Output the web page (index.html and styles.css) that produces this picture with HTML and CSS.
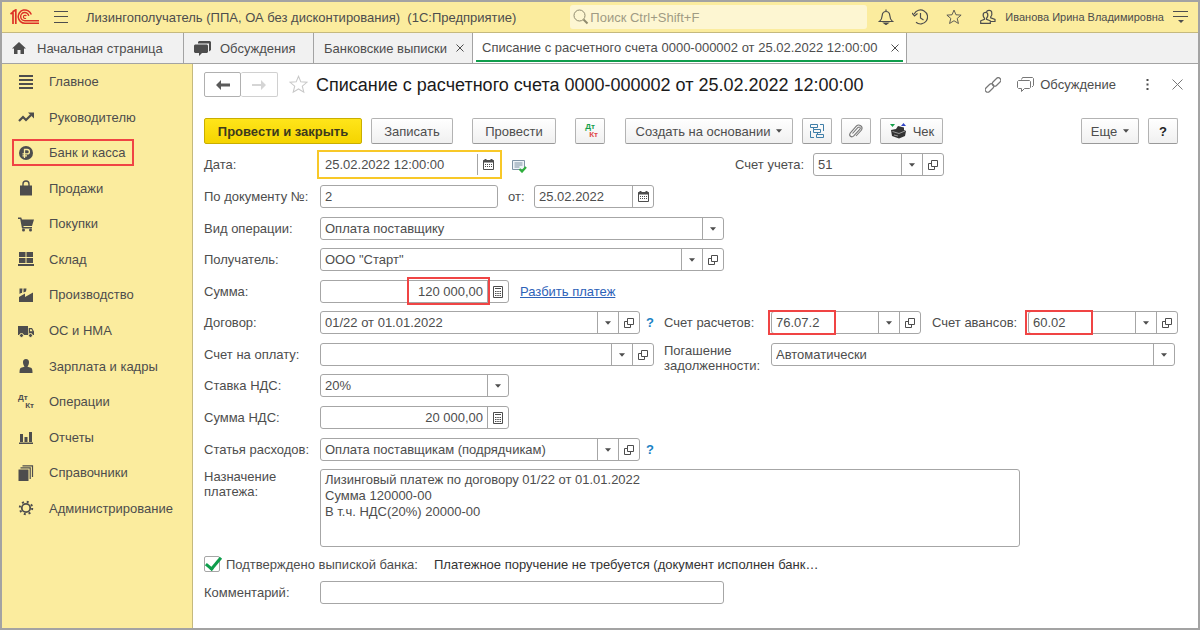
FILE: index.html
```html
<!DOCTYPE html>
<html lang="ru">
<head>
    <meta charset="UTF-8">
    <meta name="viewport" content="width=device-width, initial-scale=1.0">
    <title>Списание с расчетного счета</title>
    <link rel="stylesheet" href="styles.css">
</head>
<body>
    <!-- Общие иконки -->
    <svg class="sprite" aria-hidden="true">
        <symbol id="i-down" viewBox="0 0 7 4"><path d="M0 0h7L3.5 4z" fill="currentColor"/></symbol>
        <symbol id="i-open" viewBox="0 0 10 10"><path d="M3.500.5h6v6h-6zM3.500 3.500h-3v6h6v-3" fill="none" stroke="currentColor"/></symbol>
        <symbol id="i-cal" viewBox="0 0 11 11"><path d="M.5 1.500h10v9H.5z" fill="#fff" stroke="currentColor"/><path d="M0 2.500h11M2.500 0v2M8.500 0v2" stroke="currentColor" stroke-width="2"/><path d="M2 5.500h7M2 7.500h7" stroke="currentColor" stroke-dasharray="1 1"/></symbol>
        <symbol id="i-calc" viewBox="0 0 10 12"><path d="M.5.5h9v11h-9z" fill="#fff" stroke="currentColor"/><path d="M2 2.500h6" stroke="currentColor"/><path d="M2 5.500h6M2 7.500h6M2 9.500h6" stroke="currentColor" stroke-dasharray="1.500 .75"/></symbol>
        <symbol id="i-close" viewBox="0 0 8 8"><path d="M.5.5l7 7M7.500.5l-7 7" stroke="currentColor" fill="none"/></symbol>
        <symbol id="i-star" viewBox="0 0 18 18"><path d="M9 1.200l2.200 5.300 5.800.4-4.400 3.700 1.400 5.700L9 13.200l-5 3.100 1.400-5.700L1 6.900l5.800-.4z" fill="none" stroke="currentColor"/></symbol>
    </svg>

    <div class="window">
        <header class="topbar">
            <svg class="logo" viewBox="0 0 30 16" fill="none" stroke="#dc3026">
                <path d="M.5 5L3 3.200V15M2.500 2.800L5.800.9V15" stroke-width="1.700"/>
                <path d="M21.300 5.500A6.700 6.700 0 1 0 15 14.300H29" stroke-width="1.500"/>
                <path d="M18.800 6.800A4.100 4.100 0 1 0 15 11.700H29" stroke-width="1.400"/>
                <path d="M16.400 7A1.600 1.600 0 1 0 16 9.200" stroke-width="1.200"/>
            </svg>
            <button class="icon-btn menu" aria-label="Меню"><svg width="14" height="12" viewBox="0 0 14 12"><path d="M0 .5h14M0 5.500h14M0 11.500h14" stroke="currentColor"/></svg></button>
            <span class="app-name">Лизингополучатель (ППА, ОА без дисконтирования)&nbsp; (1С:Предприятие)</span>
            <label class="search">
                <svg width="16" height="16" viewBox="0 0 16 16" fill="none" stroke="currentColor"><circle cx="6.500" cy="6.500" r="5.500"/><path d="M10.500 10.500l4 4" stroke-width="2"/></svg>
                <input type="text" placeholder="Поиск Ctrl+Shift+F" aria-label="Поиск">
            </label>
            <div class="top-icons">
                <button class="icon-btn" aria-label="Оповещения"><svg width="16" height="16" viewBox="0 0 16 16" fill="none" stroke="currentColor" stroke-width="1.200"><path d="M1.500 12.500h13c-2-1.500-2.500-3-2.700-6C11.600 4 10 2.500 8 2.500S4.400 4 4.200 6.500c-.2 3-.7 4.500-2.700 6zM8 2.500V.5"/><path d="M6 14h4l-2 1.500z" fill="currentColor"/></svg></button>
                <button class="icon-btn" aria-label="История"><svg width="16" height="16" viewBox="0 0 16 16" fill="none" stroke="currentColor"><path d="M2.200 5A7 7 0 1 1 4 13.300" stroke-width="1.200"/><path d="M0 4l2.500 3L5.500 4.500M8.500 4v5l3 2" stroke-width="1.200"/></svg></button>
                <button class="icon-btn" aria-label="Избранное"><svg width="16" height="16"><use href="#i-star"/></svg></button>
                <button class="icon-btn" aria-label="Пользователь"><svg width="16" height="16" viewBox="0 0 16 16" fill="none" stroke="currentColor" stroke-width="1.200"><path d="M.7 14.300v-2.500l3.800-1.500v-1C3 8 3 6 3.400 4.500 4 3 7 3 7.600 4.500 8 6 8 8 6.500 9.300v1l3.800 1.500v2.500z"/><path d="M6.500 3C7 1 11 .5 11.700 3c.5 2 .2 3.500-1 4.800v1l4.300 1.700v2h-4.500"/></svg></button>
                <span class="user">Иванова Ирина Владимировна</span>
                <button class="icon-btn" aria-label="Сервис"><svg width="15" height="14" viewBox="0 0 15 14"><path d="M0 1.500h15M0 6.500h15" stroke="currentColor"/><path d="M5 10h6l-3 3z" fill="currentColor"/></svg></button>
            </div>
        </header>

        <nav class="tabs">
            <a class="tab tab-home" href="#"><svg width="14" height="12" viewBox="0 0 14 12"><path d="M7 0L0 6.500h2V12h3.500V8h3v4H12V6.500h2z" fill="currentColor"/></svg>Начальная страница</a>
            <a class="tab tab-talk" href="#"><svg width="17" height="15" viewBox="0 0 17 15" fill="currentColor"><path d="M5 0h11l1 1v8l-2 1.500V2.500H4V1z"/><path d="M1 3.500h12l1 1V11l-1 1H8l-3 3v-3H1l-1-1V4.500z"/></svg>Обсуждения</a>
            <a class="tab tab-bank" href="#">Банковские выписки<svg class="x" width="8" height="8"><use href="#i-close"/></svg></a>
            <a class="tab active" href="#"><span class="tab-inner">Списание с расчетного счета 0000-000002 от 25.02.2022 12:00:00<svg class="x" width="8" height="8"><use href="#i-close"/></svg></span></a>
        </nav>

        <div class="body">
            <nav class="sidebar">
                <div class="sections">
                    <a href="#"><svg viewBox="0 0 16 16"><path d="M1 2h14M1 6h14M1 10h14M1 14h14" stroke="currentColor" stroke-width="2"/></svg>Главное</a>
                    <a href="#"><svg viewBox="0 0 16 16"><path d="M1 12l4-4 3 3 5-5" fill="none" stroke="currentColor" stroke-width="2.200"/><path d="M10 3.500h6v6z" fill="currentColor"/></svg>Руководителю</a>
                    <a href="#" class="marked"><svg viewBox="0 0 16 16"><circle cx="8" cy="8" r="7" fill="currentColor"/><path d="M6.500 13V4.500h2.700a2.200 2.200 0 0 1 0 4.400H4.500M4.500 10.800H9" fill="none" stroke="#fbec9e" stroke-width="1.300"/></svg>Банк и касса</a>
                    <a href="#"><svg viewBox="0 0 16 16"><path d="M2 5.500h12v10H2z" fill="currentColor"/><path d="M5 8V4a3 3 0 0 1 6 0v4" fill="none" stroke="currentColor" stroke-width="1.400"/></svg>Продажи</a>
                    <a href="#"><svg viewBox="0 0 16 16" fill="currentColor"><path d="M0 1.500h3.200L4 3.500h12L14 10H5.500v1H14v1.500H4L2.200 3H0z"/><circle cx="5.500" cy="14" r="1.500"/><circle cx="12.500" cy="14" r="1.500"/></svg>Покупки</a>
                    <a href="#"><svg viewBox="0 0 16 16" fill="currentColor"><path d="M1 1h6.500v5H1zM8.500 1H15v5H8.500zM1 7h6.500v5H1zM8.500 7H15v5H8.500zM0 13h16v2H0z"/></svg>Склад</a>
                    <a href="#"><svg viewBox="0 0 16 16" fill="currentColor"><path d="M1 15V10L7 6.500V10l8-4.500V15zM1.500 1.500h3L4 6H3L1.500 7zM5.500 1.500h3L8 4.500l-2.500 1z"/></svg>Производство</a>
                    <a href="#"><svg viewBox="0 0 16 16"><path d="M0 3h10v9H0zM10.700 5H14l2 3.500V12h-5.300z" fill="currentColor"/><path d="M12 6.300h1.500l1 2H12z" fill="#fbec9e"/><g fill="currentColor" stroke="#fbec9e"><circle cx="3.500" cy="12.500" r="2"/><circle cx="12.500" cy="12.500" r="2"/></g></svg>ОС и НМА</a>
                    <a href="#"><svg viewBox="0 0 16 16" fill="currentColor"><path d="M8 1c2 0 3.200 1.500 3 3.500C10.900 6.500 10 8 9.500 8.800l3.500 1c1 .5 1.500 2 1.500 5.200h-13c0-3.200.5-4.700 1.500-5.200l3.500-1C6 8 5.100 6.500 5 4.500 4.800 2.500 6 1 8 1z"/></svg>Зарплата и кадры</a>
                    <a href="#"><span class="dtkt"><b>Дт</b><b>Кт</b></span>Операции</a>
                    <a href="#"><svg viewBox="0 0 16 16" fill="currentColor"><path d="M1 13.500h14V15H1zM2 5h3v8H2zM6.500 8h3v5h-3zM11 3h3v10h-3z"/></svg>Отчеты</a>
                    <a href="#"><svg viewBox="0 0 16 16"><path d="M.5 4.500h10V16H.5z" fill="currentColor"/><path d="M2.500 2.900h9.700V14M4.500.9h10V12" fill="none" stroke="currentColor" stroke-width="1.200"/></svg>Справочники</a>
                    <a href="#"><svg viewBox="0 0 16 16" fill="none" stroke="currentColor"><circle cx="8" cy="8" r="4.200" stroke-width="1.800"/><circle cx="8" cy="8" r="6.200" stroke-width="2" stroke-dasharray="2 2.870"/></svg>Администрирование</a>
                </div>
            </nav>

            <main class="content">
                <div class="title-row">
                    <div class="history">
                        <button aria-label="Назад"><svg width="14" height="10" viewBox="0 0 14 10"><path d="M0 5l5-5v3.500h9v3H5V10z" fill="currentColor"/></svg></button>
                        <button aria-label="Вперед" disabled><svg width="14" height="10" viewBox="0 0 14 10"><path d="M14 5L9 0v4H0v2h9v4z" fill="currentColor"/></svg></button>
                    </div>
                    <button class="icon-btn fav" aria-label="В избранное"><svg width="19" height="19"><use href="#i-star"/></svg></button>
                    <h1>Списание с расчетного счета 0000-000002 от 25.02.2022 12:00:00</h1>
                    <div class="title-tools">
                        <button class="icon-btn" aria-label="Ссылка"><svg width="16" height="16" viewBox="0 0 16 16" fill="none" stroke="#777" stroke-width="1.200"><rect x="6.500" y="2.500" width="10" height="5" rx="2.500" transform="rotate(-45 11.500 5)"/><rect x="-.5" y="8.500" width="10" height="5" rx="2.500" transform="rotate(-45 4.500 11)"/></svg></button>
                        <button class="icon-btn talk"><svg width="17" height="15" viewBox="0 0 17 15" fill="none" stroke="#777"><path d="M4.500 2.500l1-2h10l1 1v7l-1.500 1.500"/><path d="M1.500 3.500h11l1 1v6l-1 1H7.500l-3 3v-3h-3l-1-1v-6z"/></svg>Обсуждение</button>
                        <button class="icon-btn dots" aria-label="Еще действия"><svg width="3" height="11" viewBox="0 0 3 11"><path d="M.5 0h2v2h-2zM.5 4.500h2v2h-2zM.5 9h2v2h-2z" fill="currentColor"/></svg></button>
                        <button class="icon-btn close" aria-label="Закрыть"><svg width="11" height="11" viewBox="0 0 11 11"><path d="M.5.5l10 10M10.500.5l-10 10" stroke="currentColor"/></svg></button>
                    </div>
                </div>

                <div class="toolbar">
                    <button class="btn primary">Провести и закрыть</button>
                    <button class="btn w-save">Записать</button>
                    <button class="btn w-post">Провести</button>
                    <button class="btn square" aria-label="Дт Кт"><span class="dtkt color"><b>Дт</b><b>Кт</b></span></button>
                    <button class="btn w-base">Создать на основании<svg width="6" height="4"><use href="#i-down"/></svg></button>
                    <div class="btn-set">
                        <button class="btn square" aria-label="Структура"><svg width="16" height="16" viewBox="0 0 16 16" fill="none" stroke="#3f7ea8"><path d="M1.500 1.500h7v3h-7zM4.500 6.500h7v3h-7zM7.500 11.500h7v3h-7zM4.500 4.500v2M8.500 9.500v2M11 1.500h3.500V8M5 14.500H1.500V8"/></svg></button>
                        <button class="btn square" aria-label="Вложения"><svg width="16" height="16" viewBox="0 0 16 16" fill="none" stroke="#777" stroke-width="1.100"><path d="M4.500 10.500l5.500-6c1.500-1.300 3 .2 2 1.700l-6.500 7c-2 1.700-5-.5-3.300-3L8.500 3c2.500-2.500 7 .5 5 4l-5.500 6"/></svg></button>
                        <button class="btn w-check"><svg width="18" height="16" viewBox="0 0 18 16"><path d="M2 7l5-1 2-3 6 1.500V7l2 1-1 5-6 2.500L3 13z" fill="#333"/><path d="M3.500 8.500l6.500 2 6-2.500M5 12l4 1" stroke="#999" fill="none"/><path d="M1 1h5L3.500 4z" fill="#14a04a"/><path d="M12 3l2.500-3L17 3z" fill="#3346c8"/></svg>Чек</button>
                    </div>
                    <div class="btn-set right">
                        <button class="btn w-more">Еще<svg width="6" height="4"><use href="#i-down"/></svg></button>
                        <button class="btn square help">?</button>
                    </div>
                </div>

                <form class="form">
                    <div class="group">
                        <div class="row">
                            <label for="date">Дата:</label>
                            <div class="field w-date focused"><input type="text" id="date" value="25.02.2022 12:00:00"><button type="button" aria-label="Календарь"><svg width="11" height="11"><use href="#i-cal"/></svg></button></div>
                            <svg class="posted" width="15" height="13" viewBox="0 0 15 13"><path d="M.5.5h12v9H.5z" fill="#eef3f8" stroke="#7f93a5"/><path d="M2.500 3h8M2.500 5h8M2.500 7h5" stroke="#7f93a5"/><path d="M7.500 9l2.500 2.500 4-4.500" fill="none" stroke="#2eae3c" stroke-width="2.200"/></svg>
                            <label class="side account" for="account">Счет учета:</label>
                            <div class="field w-account"><input type="text" id="account" value="51"><button type="button" aria-label="Выбрать"><svg width="6" height="4"><use href="#i-down"/></svg></button><button type="button" aria-label="Открыть"><svg width="10" height="10"><use href="#i-open"/></svg></button></div>
                        </div>
                        <div class="row">
                            <label for="docnum">По документу №:</label>
                            <div class="field w-num"><input type="text" id="docnum" value="2"></div>
                            <label class="side from" for="docdate">от:</label>
                            <div class="field w-docdate"><input type="text" id="docdate" value="25.02.2022"><button type="button" aria-label="Календарь"><svg width="11" height="11"><use href="#i-cal"/></svg></button></div>
                        </div>
                        <div class="row">
                            <label for="kind">Вид операции:</label>
                            <div class="field w-long"><select id="kind"><option>Оплата поставщику</option></select><span class="arrow"><svg width="6" height="4"><use href="#i-down"/></svg></span></div>
                        </div>
                    </div>
                    <div class="group">
                        <div class="row">
                            <label for="payee">Получатель:</label>
                            <div class="field w-long"><input type="text" id="payee" value="ООО &quot;Старт&quot;"><button type="button" aria-label="Выбрать"><svg width="6" height="4"><use href="#i-down"/></svg></button><button type="button" aria-label="Открыть"><svg width="10" height="10"><use href="#i-open"/></svg></button></div>
                        </div>
                        <div class="row">
                            <label for="sum">Сумма:</label>
                            <div class="field w-sum"><input class="num" type="text" id="sum" value="120 000,00"><button type="button" aria-label="Калькулятор"><svg width="10" height="12"><use href="#i-calc"/></svg></button><span class="mark mark-sum"></span></div>
                            <a class="link" href="#">Разбить платеж</a>
                        </div>
                    </div>
                    <div class="group">
                        <div class="row">
                            <label for="contract">Договор:</label>
                            <div class="field w-mid"><input type="text" id="contract" value="01/22 от 01.01.2022"><button type="button" aria-label="Выбрать"><svg width="6" height="4"><use href="#i-down"/></svg></button><button type="button" aria-label="Открыть"><svg width="10" height="10"><use href="#i-open"/></svg></button></div>
                            <a class="hint" href="#">?</a>
                            <label class="side settle" for="settle">Счет расчетов:</label>
                            <div class="field w-acc"><input type="text" id="settle" value="76.07.2"><button type="button" aria-label="Выбрать"><svg width="6" height="4"><use href="#i-down"/></svg></button><button type="button" aria-label="Открыть"><svg width="10" height="10"><use href="#i-open"/></svg></button><span class="mark mark-acc"></span></div>
                            <label class="side advance" for="advance">Счет авансов:</label>
                            <div class="field w-acc"><input type="text" id="advance" value="60.02"><button type="button" aria-label="Выбрать"><svg width="6" height="4"><use href="#i-down"/></svg></button><button type="button" aria-label="Открыть"><svg width="10" height="10"><use href="#i-open"/></svg></button><span class="mark mark-acc"></span></div>
                        </div>
                        <div class="row">
                            <label for="invoice">Счет на оплату:</label>
                            <div class="field w-invoice"><input type="text" id="invoice"><button type="button" aria-label="Выбрать"><svg width="6" height="4"><use href="#i-down"/></svg></button><button type="button" aria-label="Открыть"><svg width="10" height="10"><use href="#i-open"/></svg></button></div>
                            <label class="side repay" for="repay">Погашение<br>задолженности:</label>
                            <div class="field w-long"><select id="repay"><option>Автоматически</option></select><span class="arrow"><svg width="6" height="4"><use href="#i-down"/></svg></span></div>
                        </div>
                    </div>
                    <div class="group">
                        <div class="row">
                            <label for="rate">Ставка НДС:</label>
                            <div class="field w-sum"><select id="rate"><option>20%</option></select><span class="arrow"><svg width="6" height="4"><use href="#i-down"/></svg></span></div>
                        </div>
                        <div class="row">
                            <label for="vat">Сумма НДС:</label>
                            <div class="field w-sum"><input class="num" type="text" id="vat" value="20 000,00"><button type="button" aria-label="Калькулятор"><svg width="10" height="12"><use href="#i-calc"/></svg></button></div>
                        </div>
                        <div class="row">
                            <label for="expense">Статья расходов:</label>
                            <div class="field w-mid"><input type="text" id="expense" value="Оплата поставщикам (подрядчикам)"><button type="button" aria-label="Выбрать"><svg width="6" height="4"><use href="#i-down"/></svg></button><button type="button" aria-label="Открыть"><svg width="10" height="10"><use href="#i-open"/></svg></button></div>
                            <a class="hint" href="#">?</a>
                        </div>
                    </div>
                    <div class="group">
                        <div class="row tall">
                            <label for="purpose">Назначение<br>платежа:</label>
                            <textarea id="purpose">Лизинговый платеж по договору 01/22 от 01.01.2022
Сумма 120000-00
В т.ч. НДС(20%) 20000-00</textarea>
                        </div>
                        <div class="confirm">
                            <input type="checkbox" id="confirmed" checked>
                            <label for="confirmed">Подтверждено выпиской банка:</label>
                            <span class="note">Платежное поручение не требуется (документ исполнен банк…</span>
                        </div>
                        <div class="row">
                            <label for="comment">Комментарий:</label>
                            <div class="field w-long"><input type="text" id="comment"></div>
                        </div>
                    </div>
                </form>
            </main>
        </div>
    </div>
</body>
</html>
```
FILE: styles.css
```css
* {
    box-sizing: border-box;
}

body {
    margin: 0;
    font-family: "Liberation Sans", Arial, sans-serif;
    font-size: 13px;
    line-height: 15px;
    color: #4d4d4d;
    background-color: #ffffff;
}

button, input, select, textarea {
    font: inherit;
    color: inherit;
    margin: 0;
}

button {
    padding: 0;
    cursor: pointer;
}

a {
    color: inherit;
    text-decoration: none;
}

svg {
    flex: none;
}

.sprite {
    position: absolute;
    width: 0;
    height: 0;
}

.window {
    display: flex;
    flex-direction: column;
    min-height: 100vh;
    border: 2px solid #a3a3a3;
}

.icon-btn {
    display: flex;
    align-items: center;
    background: none;
    border: none;
}

/* Верхняя панель */
.topbar {
    display: flex;
    align-items: center;
    height: 31px;
    padding: 0 10px 0 8px;
    background-color: #fbec9e;
    border-bottom: 1px solid #c5b97e;
}

.logo {
    width: 30px;
    height: 16px;
}

.menu {
    margin: 0 18px 0 14px;
}

.app-name {
    white-space: nowrap;
}

.search {
    display: flex;
    align-items: center;
    width: 297px;
    height: 24px;
    margin-left: auto;
    padding-left: 3px;
    color: #8f8a6e;
    background-color: #fdf6d2;
    border-radius: 3px;
}

.search input {
    flex: 1;
    min-width: 0;
    padding: 0 1px;
    background: none;
    border: none;
}

.search input::placeholder {
    color: #a09b84;
    opacity: 1;
}

.top-icons {
    display: flex;
    align-items: center;
    gap: 18px;
    margin-left: 11px;
}

.user {
    margin: 0 -9px;
    font-size: 11px;
    white-space: nowrap;
}

/* Вкладки */
.tabs {
    display: flex;
    height: 31px;
    background-color: #f1f1f1;
    border-bottom: 1px solid #a3a3a3;
}

.tab {
    display: flex;
    align-items: center;
    padding: 0 8px 0 10px;
    border-right: 1px solid #a3a3a3;
    white-space: nowrap;
}

.tab-home {
    width: 182px;
    gap: 11px;
}

.tab-talk {
    width: 130px;
    gap: 9px;
}

.tab-bank {
    width: 159px;
}

.x {
    margin-left: auto;
}

.active {
    width: 434px;
    padding: 0 3px;
    background-color: #ffffff;
}

.tab-inner {
    display: flex;
    flex: 1;
    align-items: center;
    height: 29px;
    padding: 2px 4px 0 6px;
    border-bottom: 2px solid #0f9d4c;
    align-self: flex-start;
}

/* Левое меню */
.body {
    display: flex;
    flex: 1;
}

.sidebar {
    flex: none;
    width: 191px;
    background-color: #fbec9e;
    border-right: 1px solid #c5b97e;
}

.sections {
    display: flex;
    flex-direction: column;
    justify-content: space-between;
    height: 454px;
    margin: 4px 0 0 10px;
}

.sections a {
    display: flex;
    align-items: center;
    gap: 15px;
    height: 27px;
    padding-left: 6px;
}

.sections svg {
    width: 16px;
    height: 16px;
}

.sections .marked {
    width: 122px;
    outline: 2px solid #f04444;
    outline-offset: -2px;
}

.dtkt {
    display: flex;
    flex-direction: column;
    width: 16px;
    font-size: 8px;
    line-height: 8px;
}

.dtkt b:last-child {
    align-self: flex-end;
}

.dtkt.color b:first-child {
    color: #14a04a;
}

.dtkt.color b:last-child {
    color: #e04848;
}

/* Заголовок документа */
.content {
    flex: 1;
    min-width: 0;
    padding: 8px 20px 20px 11px;
}

.title-row {
    display: flex;
    align-items: center;
    height: 25px;
}

.history {
    display: flex;
}

.history button {
    display: flex;
    align-items: center;
    justify-content: center;
    width: 37px;
    height: 25px;
    color: #5a5a5a;
    background-color: #ffffff;
    border: 1px solid #b0b0b0;
    border-radius: 2px;
}

.history button:disabled {
    color: #d5d5d5;
    border-color: #d0d0d0;
    border-left: none;
}

.fav {
    margin: 0 8px 0 11px;
    color: #c8c8c8;
}

h1 {
    margin: 0;
    font-size: 18px;
    line-height: 24px;
    font-weight: normal;
    color: #1a1a1a;
    white-space: nowrap;
}

.title-tools {
    display: flex;
    align-items: center;
    gap: 16px;
    margin-left: auto;
    margin-right: -5px;
}

.talk {
    gap: 6px;
}

.dots {
    margin: 0 7px 0 14px;
}

.close {
    color: #777777;
}

/* Командная панель */
.toolbar {
    display: flex;
    gap: 9px;
    margin: 21px 0 9px;
}

.btn-set {
    display: flex;
    gap: 9px;
}

.right {
    margin-left: auto;
}

.btn {
    display: flex;
    align-items: center;
    justify-content: center;
    gap: 6px;
    height: 26px;
    background: linear-gradient(#ffffff, #f0f0f0);
    border: 1px solid #b3b3b3;
    border-bottom-color: #999999;
    border-radius: 2px;
    white-space: nowrap;
}

.primary {
    width: 158px;
    font-weight: bold;
    color: #3d3a1c;
    background: linear-gradient(#ffe51a, #f5d400);
    border-color: #c9ae00;
}

.square {
    width: 30px;
}

.w-save {
    width: 82px;
}

.w-post {
    width: 84px;
    margin: 0 10px;
}

.w-base {
    width: 168px;
    margin-left: 11px;
}

.w-check {
    width: 63px;
}

.w-more {
    width: 58px;
}

.help {
    font-weight: bold;
    color: #222222;
}

/* Форма */
.form {
    display: flex;
    flex-direction: column;
    gap: 8px;
}

.group {
    display: flex;
    flex-direction: column;
    gap: 9px;
}

.row {
    display: flex;
    align-items: center;
    height: 23px;
    white-space: nowrap;
}

.row > label:first-child {
    flex: none;
    width: 116px;
}

.side {
    flex: none;
}

.account {
    width: 78px;
    margin-left: 208px;
}

.from {
    width: 26px;
    margin-left: 10px;
}

.settle {
    width: 107px;
    margin-left: 10px;
}

.advance {
    width: 96px;
    margin-left: 11px;
}

.repay {
    width: 107px;
    margin-left: 10px;
    margin-top: 7px;
}

.field {
    position: relative;
    display: flex;
    height: 23px;
    background-color: #ffffff;
    border: 1px solid #a6a6a6;
    border-radius: 3px;
}

.field input, .field select {
    flex: 1;
    min-width: 0;
    padding: 0 4px;
    background: none;
    border: none;
    outline: none;
    appearance: none;
}

.field .num {
    text-align: right;
}

.field button, .arrow {
    display: flex;
    flex: none;
    align-items: center;
    justify-content: center;
    width: 21px;
    background: none;
    border: none;
    border-left: 1px solid #a6a6a6;
}

.arrow {
    pointer-events: none;
}

.focused {
    border-color: transparent;
    border-radius: 0;
    outline: 2px solid #f8c828;
    outline-offset: 1px;
}

.w-date {
    width: 179px;
}

.w-account {
    width: 131px;
}

.w-num {
    width: 178px;
}

.w-docdate {
    width: 120px;
}

.w-sum {
    width: 189px;
}

.w-mid {
    width: 320px;
}

.w-invoice {
    width: 334px;
}

.w-acc {
    width: 150px;
}

.w-long {
    width: 404px;
}

.posted {
    margin: 4px 0 0 13px;
}

.link {
    margin-left: 11px;
    color: #2d62b8;
    text-decoration: underline;
}

.hint {
    width: 8px;
    margin-left: 6px;
    font-weight: bold;
    color: #1b82c4;
}

/* Выделение красной рамкой */
.mark {
    position: absolute;
    border: 2px solid #f04444;
    pointer-events: none;
}

.mark-sum {
    top: -4px;
    right: 18px;
    width: 83px;
    height: 28px;
}

.mark-acc {
    top: -2px;
    left: -4px;
    width: 68px;
    height: 25px;
}

.tall {
    align-items: flex-start;
    height: auto;
}

textarea {
    width: 700px;
    height: 78px;
    padding: 2px 4px;
    line-height: 16px;
    border: 1px solid #a6a6a6;
    border-radius: 3px;
    resize: none;
}

.confirm {
    display: flex;
    align-items: center;
    height: 16px;
    white-space: nowrap;
}

.confirm input {
    flex: none;
    width: 16px;
    height: 16px;
    margin-right: 6px;
    appearance: none;
    border: 1px solid #a6a6a6;
    border-radius: 2px;
    position: relative;
}

.confirm input:checked::after {
    content: "";
    position: absolute;
    left: 4px;
    top: -3px;
    width: 6px;
    height: 13px;
    border: solid #0f9d4c;
    border-width: 0 3px 3px 0;
    transform: rotate(40deg);
}

.note {
    margin-left: 16px;
    color: #333333;
}
```
